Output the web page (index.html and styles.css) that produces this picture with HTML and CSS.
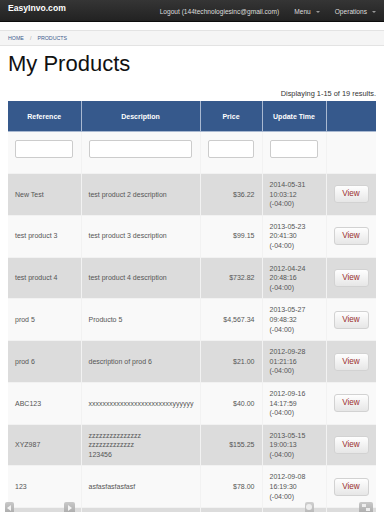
FILE: index.html
```html
<!DOCTYPE html>
<html>
<head>
<meta charset="utf-8">
<title>My Products</title>
<link rel="stylesheet" href="styles.css">
</head>
<body>
	<div class="navbar">
		<a class="brand" href="#">EasyInvo.com</a>
		<ul class="nav">
			<li><a href="#">Logout (144technologiesinc@gmail.com)</a></li>
			<li><a href="#">Menu <b class="caret"></b></a></li>
			<li><a href="#">Operations <b class="caret"></b></a></li>
		</ul>
	</div>
	<ul class="breadcrumb">
		<li><a href="#">Home</a></li>
		<li class="divider">/</li>
		<li><a href="#">Products</a></li>
	</ul>
	<h1>My Products</h1>
	<div class="summary">Displaying 1-15 of 19 results.</div>
	<table class="grid">
		<colgroup>
			<col class="c-ref"><col class="c-desc"><col class="c-price"><col class="c-time"><col class="c-btn">
		</colgroup>
		<thead>
			<tr><th>Reference</th><th>Description</th><th>Price</th><th>Update Time</th><th></th></tr>
			<tr class="filters">
				<td><input type="text"></td>
				<td><input type="text"></td>
				<td><input type="text"></td>
				<td><input type="text"></td>
				<td></td>
			</tr>
		</thead>
		<tbody>
			<tr class="odd"><td>New Test</td><td>test product 2 description</td><td class="price">$36.22</td><td>2014-05-31<br>10:03:12<br>(-04:00)</td><td><a class="btn" href="#">View</a></td></tr>
			<tr class="even"><td>test product 3</td><td>test product 3 description</td><td class="price">$99.15</td><td>2013-05-23<br>20:41:30<br>(-04:00)</td><td><a class="btn" href="#">View</a></td></tr>
			<tr class="odd"><td>test product 4</td><td>test product 4 description</td><td class="price">$732.82</td><td>2012-04-24<br>20:48:16<br>(-04:00)</td><td><a class="btn" href="#">View</a></td></tr>
			<tr class="even"><td>prod 5</td><td>Producto 5</td><td class="price">$4,567.34</td><td>2013-05-27<br>09:48:32<br>(-04:00)</td><td><a class="btn" href="#">View</a></td></tr>
			<tr class="odd"><td>prod 6</td><td>description of prod 6</td><td class="price">$21.00</td><td>2012-09-28<br>01:21:16<br>(-04:00)</td><td><a class="btn" href="#">View</a></td></tr>
			<tr class="even"><td>ABC123</td><td>xxxxxxxxxxxxxxxxxxxxxxxxyyyyyy</td><td class="price">$40.00</td><td>2012-09-16<br>14:17:59<br>(-04:00)</td><td><a class="btn" href="#">View</a></td></tr>
			<tr class="odd"><td>XYZ987</td><td>zzzzzzzzzzzzzzz<br>zzzzzzzzzzzzz<br>123456</td><td class="price">$155.25</td><td>2013-05-15<br>19:00:13<br>(-04:00)</td><td><a class="btn" href="#">View</a></td></tr>
			<tr class="even"><td>123</td><td>asfasfasfasfasf</td><td class="price">$78.00</td><td>2012-09-08<br>16:19:30<br>(-04:00)</td><td><a class="btn" href="#">View</a></td></tr>
			<tr class="odd next"><td></td><td></td><td></td><td></td><td></td></tr>
		</tbody>
	</table>
	<div class="scroller">
		<span class="sbtn s-prev"></span>
		<span class="sbtn s-next"></span>
		<span class="sbtn s-round"></span>
		<span class="sbtn s-resize"></span>
	</div>
</body>
</html>
```
FILE: styles.css
```css
*{
	margin:0;
	padding:0;
	list-style:none;
	text-decoration:none;
}
body{
	font-family:"Liberation Sans", Arial, sans-serif;
	background:#fff;
	color:#333;
}
.navbar{
	height:21px;
	background:linear-gradient(#353535,#222);
	border-bottom:1px solid #0d0d0d;
	display:flex;
	align-items:center;
	padding:0 8px;
}
.brand{
	color:#fff;
	font-weight:bold;
	font-size:8.6px;
	line-height:10px;
	align-self:flex-start;
	margin-top:2.5px;
}
.nav{
	display:flex;
	margin-left:auto;
	padding-top:2px;
}
.nav li{
	margin-left:15px;
}
.nav li:first-child{
	margin-left:0;
}
.nav a{
	color:#ddd;
	font-size:6.6px;
	line-height:9px;
	display:flex;
	align-items:center;
}
.caret{
	display:inline-block;
	width:0;
	height:0;
	margin-left:5px;
	border-top:2.5px solid #999;
	border-left:2px solid transparent;
	border-right:2px solid transparent;
}
.breadcrumb{
	display:flex;
	align-items:center;
	margin-top:8px;
	height:14px;
	padding-left:8px;
	background:#f5f5f5;
	border:1px solid #e3e3e3;
	border-left:0;
	border-right:0;
	font-size:5.3px;
	text-transform:uppercase;
}
.breadcrumb a{
	color:#3e5c8e;
}
.breadcrumb .divider{
	color:#aaa;
	margin:0 6px;
}
h1{
	font-size:22px;
	font-weight:normal;
	line-height:26px;
	color:#111;
	padding-left:8px;
	margin-top:5px;
}
.summary{
	text-align:right;
	font-size:7.4px;
	line-height:9px;
	padding-right:8px;
	margin-top:12px;
	margin-bottom:3px;
	color:#333;
}
.grid{
	width:368px;
	margin-left:8px;
	border-collapse:collapse;
	table-layout:fixed;
	font-size:7px;
	color:#555;
}
.c-ref{ width:73px; }
.c-desc{ width:119px; }
.c-price{ width:62px; }
.c-time{ width:64px; }
.c-btn{ width:50px; }
.grid th{
	height:30px;
	background:#36598c;
	color:#fff;
	font-weight:bold;
	font-size:7px;
	text-align:center;
	border-left:1px solid #a9b9d1;
	border-bottom:1px solid #a9b9d1;
}
.grid th:first-child{
	border-left:0;
}
.grid td{
	padding:6px 7px;
	line-height:9.6px;
	vertical-align:middle;
	border-left:1px solid #f2f2f2;
	border-top:1px solid #f2f2f2;
}
.grid td:first-child{
	border-left:0;
}
.grid .next td{
	height:28px;
}
.filters td{
	background:#f9f9f9;
	padding:8px 8px 15px 7px;
	vertical-align:top;
	border-top:0;
}
.filters input{
	display:block;
	width:100%;
	height:18px;
	box-sizing:border-box;
	border:1px solid #ccc;
	border-radius:2px;
	background:#fff;
}
.odd td{
	background:#dcdcdc;
}
.even td{
	background:#f9f9f9;
}
.grid .price{
	text-align:right;
}
.btn{
	display:block;
	width:35px;
	height:18px;
	box-sizing:border-box;
	line-height:16px;
	text-align:center;
	font-size:8.2px;
	color:#9a2f2f;
	background:linear-gradient(#fefefe,#e6e6e6);
	border:1px solid #d2d2d2;
	border-radius:3px;
}
.scroller{
	position:fixed;
	left:0;
	bottom:0;
	width:384px;
	height:11px;
}
.sbtn{
	position:absolute;
	bottom:-2px;
	height:12px;
	background:linear-gradient(#c9c9c9,#a9a9a9);
	border-radius:2px;
}
.s-prev{ left:5px; width:9px; }
.s-next{ left:64px; width:11px; }
.s-round{ left:305px; width:9px; background:linear-gradient(#d0d0d0,#b5b5b5); }
.s-resize{ left:359px; width:14px; }
.s-prev:after,.s-next:after{
	content:"";
	position:absolute;
	top:3px;
	border-top:3px solid transparent;
	border-bottom:3px solid transparent;
}
.s-prev:after{
	left:2px;
	border-right:4px solid #f4f4f4;
}
.s-next:after{
	left:4px;
	border-left:4px solid #f4f4f4;
}
.s-round:after{
	content:"";
	position:absolute;
	left:1px;
	top:2px;
	width:6px;
	height:6px;
	border-radius:50%;
	background:#eee;
}
.s-resize:before,.s-resize:after{
	content:"";
	position:absolute;
	width:4px;
	height:3px;
	background:#eee;
}
.s-resize:before{ left:3px; top:2px; }
.s-resize:after{ left:7px; top:6px; }
```
